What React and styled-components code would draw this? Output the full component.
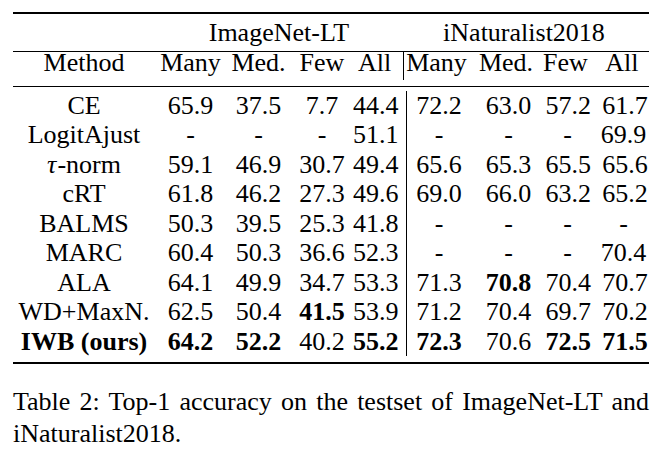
import React from "react";
import styled, { createGlobalStyle } from "styled-components";

const GlobalStyle = createGlobalStyle`
  body {
    margin: 0;
    background: #fff;
    color: #000;
  }
`;

const SERIF = `"Liberation Serif", "Times New Roman", Times, "DejaVu Serif", serif`;

// column widths, the "All" columns keep a little room before the divider
const COLS = [
  { w: 71 },
  { w: 65 },
  { w: 62 },
  { w: 50, pr: 7 },
  { w: 66, divider: true },
  { w: 74 },
  { w: 44 },
  { w: 68 },
];

const ROWS = [
  ["CE", "65.9", "37.5", "7.7", "44.4", "72.2", "63.0", "57.2", "61.7"],
  ["LogitAjust", "-", "-", "-", "51.1", "-", "-", "-", "69.9"],
  ["tau", "59.1", "46.9", "30.7", "49.4", "65.6", "65.3", "65.5", "65.6"],
  ["cRT", "61.8", "46.2", "27.3", "49.6", "69.0", "66.0", "63.2", "65.2"],
  ["BALMS", "50.3", "39.5", "25.3", "41.8", "-", "-", "-", "-"],
  ["MARC", "60.4", "50.3", "36.6", "52.3", "-", "-", "-", "70.4"],
  ["ALA", "64.1", "49.9", "34.7", "53.3", "71.3", "*70.8", "70.4", "70.7"],
  ["WD+MaxN.", "62.5", "50.4", "*41.5", "53.9", "71.2", "70.4", "69.7", "70.2"],
  ["*IWB (ours)", "*64.2", "*52.2", "40.2", "*55.2", "*72.3", "70.6", "*72.5", "*71.5"],
];

const HEAD = ["Many", "Med.", "Few", "All", "Many", "Med.", "Few", "All"];

const parse = (v) =>
  v.startsWith("*") ? { text: v.slice(1), bold: true } : { text: v, bold: false };

const renderMethod = (v) => {
  if (v === "tau") {
    return (
      <>
        <Tau>τ</Tau>-norm
      </>
    );
  }
  return v;
};

export default function App() {
  return (
    <>
      <GlobalStyle />
      <Page>
        <Rule thick />
        <GroupRow>
          <Cell w={142} />
          <Cell w={248}>ImageNet-LT</Cell>
          <Cell w={246} pr={4}>
            iNaturalist2018
          </Cell>
        </GroupRow>
        <Rule />
        <HeadRow>
          <Cell w={142}>Method</Cell>
          {HEAD.map((h, i) => (
            <Cell key={i} w={COLS[i].w} pr={COLS[i].pr} divider={COLS[i].divider}>
              {h}
            </Cell>
          ))}
        </HeadRow>
        <Rule />
        <Body>
          {ROWS.map((row, r) => {
            const method = parse(row[0]);
            return (
              <DataRow key={r}>
                <Cell w={142} bold={method.bold}>
                  {renderMethod(method.text)}
                </Cell>
                {row.slice(1).map((v, i) => {
                  const c = parse(v);
                  return (
                    <Cell
                      key={i}
                      w={COLS[i].w}
                      pr={COLS[i].pr}
                      divider={COLS[i].divider}
                      bold={c.bold}
                    >
                      {c.text}
                    </Cell>
                  );
                })}
              </DataRow>
            );
          })}
        </Body>
        <Rule thick />
        <Caption>
          Table 2: Top-1 accuracy on the testset of ImageNet-LT and
          iNaturalist2018.
        </Caption>
      </Page>
    </>
  );
}

const Page = styled.div`
  width: 636px;
  padding: 12px 0 0 13px;
  font-family: ${SERIF};
  font-size: 26px;
`;

const Rule = styled.div`
  height: ${(p) => (p.thick ? "2px" : "1px")};
  background: #000;
`;

const Row = styled.div`
  display: flex;
  white-space: nowrap;
`;

const GroupRow = styled(Row)`
  padding: 4px 0 3px;
  line-height: 30px;
`;

const HeadRow = styled(Row)`
  margin-bottom: 6px;
  line-height: 20px;

  & > div {
    padding-top: 1px;
    height: 28px;
  }
`;

const Body = styled.div`
  padding: 3.5px 0 6px;
`;

const DataRow = styled(Row)`
  height: 29.5px;
  line-height: 29.5px;
`;

const Cell = styled.div`
  flex: 0 0 ${(p) => p.w}px;
  box-sizing: border-box;
  display: flex;
  justify-content: center;
  padding-right: ${(p) => p.pr || 0}px;
  border-left: ${(p) => (p.divider ? "1px solid #000" : "none")};
  font-weight: ${(p) => (p.bold ? 700 : 400)};
`;

const Tau = styled.i`
  font-style: italic;
  margin-right: 1px;
`;

const Caption = styled.p`
  margin: 22px 0 0;
  font-family: ${SERIF};
  line-height: 32px;
  text-align: justify;
`;
